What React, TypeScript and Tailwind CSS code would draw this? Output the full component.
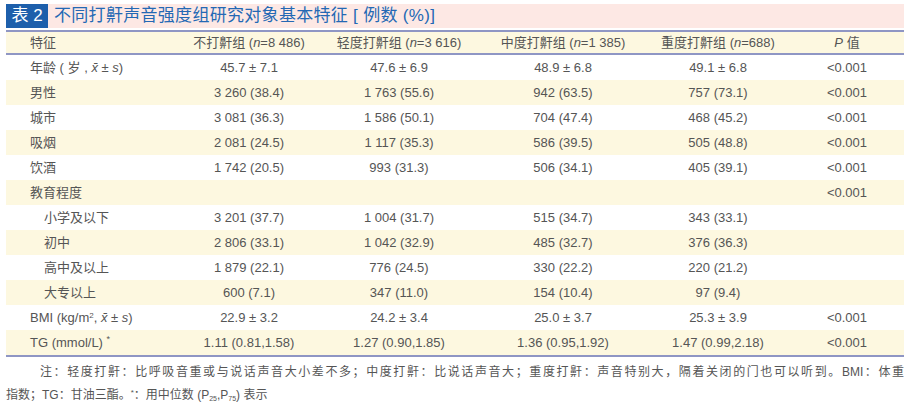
import React from 'react'

const FONT = '"Liberation Sans", "Noto Sans CJK SC", sans-serif'

type Row = { label: React.ReactNode; indent?: boolean; v: string[]; p: string }

const rows: Row[] = [
  {
    label: (
      <>
        年龄 ( 岁 , <span className="italic">x̄</span> ± <span className="italic">s</span>)
      </>
    ),
    v: ['45.7 ± 7.1', '47.6 ± 6.9', '48.9 ± 6.8', '49.1 ± 6.8'],
    p: '<0.001',
  },
  { label: '男性', v: ['3 260 (38.4)', '1 763 (55.6)', '942 (63.5)', '757 (73.1)'], p: '<0.001' },
  { label: '城市', v: ['3 081 (36.3)', '1 586 (50.1)', '704 (47.4)', '468 (45.2)'], p: '<0.001' },
  { label: '吸烟', v: ['2 081 (24.5)', '1 117 (35.3)', '586 (39.5)', '505 (48.8)'], p: '<0.001' },
  { label: '饮酒', v: ['1 742 (20.5)', '993 (31.3)', '506 (34.1)', '405 (39.1)'], p: '<0.001' },
  { label: '教育程度', v: ['', '', '', ''], p: '<0.001' },
  { label: '小学及以下', indent: true, v: ['3 201 (37.7)', '1 004 (31.7)', '515 (34.7)', '343 (33.1)'], p: '' },
  { label: '初中', indent: true, v: ['2 806 (33.1)', '1 042 (32.9)', '485 (32.7)', '376 (36.3)'], p: '' },
  { label: '高中及以上', indent: true, v: ['1 879 (22.1)', '776 (24.5)', '330 (22.2)', '220 (21.2)'], p: '' },
  { label: '大专以上', indent: true, v: ['600 (7.1)', '347 (11.0)', '154 (10.4)', '97 (9.4)'], p: '' },
  {
    label: (
      <>
        BMI (kg/m<sup className="text-[8px] leading-none">2</sup>, <span className="italic">x̄</span> ± <span className="italic">s</span>)
      </>
    ),
    v: ['22.9 ± 3.2', '24.2 ± 3.4', '25.0 ± 3.7', '25.3 ± 3.9'],
    p: '<0.001',
  },
  {
    label: (
      <>
        TG (mmol/L) <sup className="text-[9px] leading-none">*</sup>
      </>
    ),
    v: ['1.11 (0.81,1.58)', '1.27 (0.90,1.85)', '1.36 (0.95,1.92)', '1.47 (0.99,2.18)'],
    p: '<0.001',
  },
]

const COLS = ['w-[138px]', 'w-[162px]', 'w-[166px]', 'w-[144px]']

export default function App() {
  return (
    <div className="w-[908px] h-[409px] bg-white text-[#555] overflow-hidden" style={{ fontFamily: FONT }}>
      {/* title bar */}
      <div className="ml-[6px] mt-[4px] w-[898px] h-[24px] flex items-center bg-[#fde8e4]">
        <div className="h-full w-[42px] bg-[#1d5fab] text-white text-[17px] flex items-center justify-center">表 2</div>
        <div className="ml-[6px] text-[17px] text-[#2468b4] tracking-[0.3px]">不同打鼾声音强度组研究对象基本特征 [ 例数 (%)]</div>
      </div>

      {/* table */}
      <div className="ml-[6px] w-[898px] mt-[2px] text-[13px]">
        <div className="flex items-center h-[25px] bg-[#fdf8e0] border-t-2 border-b-2 border-[#8f96c4]">
          <div className="w-[174px] pl-[24px]">特征</div>
          <div className={`${COLS[0]} text-center`}>不打鼾组 (<span className="italic">n</span>=8 486)</div>
          <div className={`${COLS[1]} text-center`}>轻度打鼾组 (<span className="italic">n</span>=3 616)</div>
          <div className={`${COLS[2]} text-center`}>中度打鼾组 (<span className="italic">n</span>=1 385)</div>
          <div className={`${COLS[3]} text-center`}>重度打鼾组 (<span className="italic">n</span>=688)</div>
          <div className="w-[114px] text-center">
            <span className="italic">P</span> 值
          </div>
        </div>
        {rows.map((r, i) => (
          <div key={i} className={`flex items-center h-[25px] ${i % 2 === 1 ? 'bg-[#fdf8e0]' : 'bg-white'}`}>
            <div className={`w-[174px] whitespace-nowrap ${r.indent ? 'pl-[38px]' : 'pl-[24px]'}`}>{r.label}</div>
            {r.v.map((v, j) => (
              <div key={j} className={`${COLS[j]} text-center`}>{v}</div>
            ))}
            <div className="w-[114px] text-center">{r.p}</div>
          </div>
        ))}
        <div className="h-[2px] bg-[#8f96c4]" />
      </div>

      {/* footnote */}
      <div className="ml-[6px] w-[898px] mt-[4px] text-[12px] leading-[23px] text-[#555]">
        <p className="pl-[34px] text-justify [text-align-last:justify] whitespace-nowrap">
          注：轻度打鼾：比呼吸音重或与说话声音大小差不多；中度打鼾：比说话声音大；重度打鼾：声音特别大，隔着关闭的门也可以听到。BMI：体重
        </p>
        <p>
          指数；TG：甘油三酯。<sup className="text-[8px] leading-none">*</sup>：用中位数 (P<sub className="text-[7px] leading-none">25</sub>,P<sub className="text-[7px] leading-none">75</sub>) 表示
        </p>
      </div>
    </div>
  )
}
